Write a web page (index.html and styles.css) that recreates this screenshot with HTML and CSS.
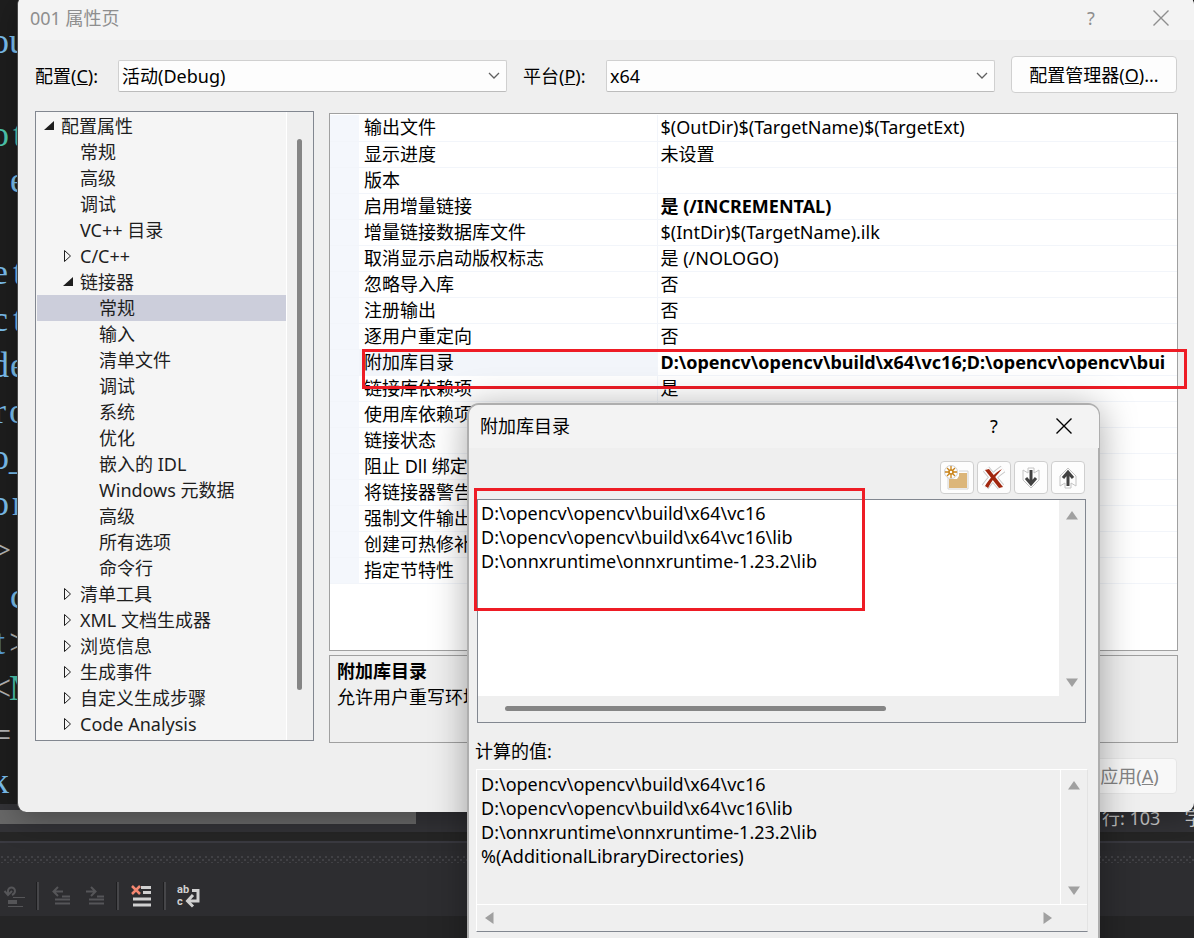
FILE: index.html
```html
<!DOCTYPE html>
<html lang="zh-CN">
<head>
<meta charset="utf-8">
<title>001 属性页</title>
<link rel="stylesheet" href="styles.css">
</head>
<body>
<div class="desktop">
  <div class="ide">
    <div class="code">
      <div class="line"><b>o</b><b>u</b></div>
      <div class="line"></div>
      <div class="line type"><b>o</b><b>t</b></div>
      <div class="line"><b></b><b>e</b></div>
      <div class="line"></div>
      <div class="line"><b>e</b><b>t</b></div>
      <div class="line"><b>c</b><b>t</b></div>
      <div class="line"><b>d</b><b>e</b></div>
      <div class="line"><b>r</b><b>o</b></div>
      <div class="line"><b>o</b><b>_</b></div>
      <div class="line"><b>o</b><b>r</b></div>
      <div class="line punct"><b>&gt;</b></div>
      <div class="line"><b></b><b>c</b></div>
      <div class="line keyword"><b>t</b><b class="punct">&gt;</b></div>
      <div class="line type"><b class="punct">&lt;</b><b>M</b></div>
      <div class="line punct"><b>=</b></div>
      <div class="line"><b>k</b></div>
    </div>
    <div class="status">
      <div class="hscroll"></div>
      <div class="position"><span>行: 103</span><span>字</span></div>
    </div>
    <div class="splitter"></div>
    <div class="panel">
      <div class="grip"></div>
      <div class="tools">
        <svg class="tool-icon dim" viewBox="0 0 22 24"><path d="M5 10V7a3.500 3.500 0 1 1 7 0c0 2-1 3-3 4M1.500 7 5 11l4-4" fill="none" stroke="currentColor" stroke-width="2"/><path d="M10 13.500h12M5 22.500h15" stroke="currentColor"/><path d="M5 16h9v4H5z" fill="currentColor"/></svg>
        <i class="sep"></i>
        <svg class="tool-icon dim" viewBox="0 0 22 24"><path d="M3 7.500h10M8 3 3.500 7.500 8 12" fill="none" stroke="currentColor" stroke-width="2"/><path d="M12 12.500h8M5 15.500h15M5 19.500h15" stroke="currentColor" stroke-width="2"/></svg>
        <svg class="tool-icon dim" viewBox="0 0 22 24"><path d="M3 7.500h10M8 3l4.500 4.500L8 12" fill="none" stroke="currentColor" stroke-width="2"/><path d="M14 12.500h7M6 15.500h15M6 19.500h15" stroke="currentColor" stroke-width="2"/></svg>
        <i class="sep"></i>
        <svg class="tool-icon" viewBox="0 0 22 24"><path d="M11 3.500h10M13 8.500h8M3 15h18M3 21h18" stroke="#d0d0d0" stroke-width="3"/><path d="m2 2 8 8M10 2l-8 8" stroke="#f48771" stroke-width="2.500"/></svg>
        <i class="sep"></i>
        <div class="wrap-icon"><span>ab</span><span>c</span><svg viewBox="0 0 24 24"><path d="M15 6.500h6V17h-9" fill="none" stroke="#d0d0d0" stroke-width="3"/><path d="m16 11-5.500 6 5.500 5.500" fill="none" stroke="#d0d0d0" stroke-width="3"/></svg></div>
      </div>
    </div>
  </div>

  <main class="window">
    <header class="titlebar">
      <h1>001 属性页</h1>
      <button class="caption" aria-label="帮助">?</button>
      <button class="caption" aria-label="关闭"><svg viewBox="0 0 16 16"><path d="m.5.5 15 15m0-15-15 15"/></svg></button>
    </header>
    <div class="options">
      <label for="config">配置(<u>C</u>):</label>
      <div class="combo"><select id="config"><option>活动(Debug)</option></select><svg viewBox="0 0 12 8"><path d="m1 1 5 5 5-5"/></svg></div>
      <label for="platform">平台(<u>P</u>):</label>
      <div class="combo"><select id="platform"><option>x64</option></select><svg viewBox="0 0 12 8"><path d="m1 1 5 5 5-5"/></svg></div>
      <button class="btn">配置管理器(<u>O</u>)...</button>
    </div>
    <div class="content">
      <nav class="tree">
        <ul>
          <li class="open"><svg viewBox="0 0 10 10"><path d="M10 0v9H0z"/></svg>配置属性</li>
          <li class="l1">常规</li>
          <li class="l1">高级</li>
          <li class="l1">调试</li>
          <li class="l1">VC++ 目录</li>
          <li class="l1 closed"><svg viewBox="0 0 8 13"><path d="M.5.500v11l6-5.500z"/></svg>C/C++</li>
          <li class="l1 open"><svg viewBox="0 0 10 10"><path d="M10 0v9H0z"/></svg>链接器</li>
          <li class="l2 selected">常规</li>
          <li class="l2">输入</li>
          <li class="l2">清单文件</li>
          <li class="l2">调试</li>
          <li class="l2">系统</li>
          <li class="l2">优化</li>
          <li class="l2">嵌入的 IDL</li>
          <li class="l2">Windows 元数据</li>
          <li class="l2">高级</li>
          <li class="l2">所有选项</li>
          <li class="l2">命令行</li>
          <li class="l1 closed"><svg viewBox="0 0 8 13"><path d="M.5.500v11l6-5.500z"/></svg>清单工具</li>
          <li class="l1 closed"><svg viewBox="0 0 8 13"><path d="M.5.500v11l6-5.500z"/></svg>XML 文档生成器</li>
          <li class="l1 closed"><svg viewBox="0 0 8 13"><path d="M.5.500v11l6-5.500z"/></svg>浏览信息</li>
          <li class="l1 closed"><svg viewBox="0 0 8 13"><path d="M.5.500v11l6-5.500z"/></svg>生成事件</li>
          <li class="l1 closed"><svg viewBox="0 0 8 13"><path d="M.5.500v11l6-5.500z"/></svg>自定义生成步骤</li>
          <li class="l1 closed"><svg viewBox="0 0 8 13"><path d="M.5.500v11l6-5.500z"/></svg>Code Analysis</li>
        </ul>
        <div class="tree-scroll"><i></i></div>
      </nav>
      <section class="props">
        <div class="grid">
          <table>
            <colgroup><col class="gutter"><col class="name"><col></colgroup>
            <tbody>
            <tr><td></td><th>输出文件</th><td>$(OutDir)$(TargetName)$(TargetExt)</td></tr>
            <tr><td></td><th>显示进度</th><td>未设置</td></tr>
            <tr><td></td><th>版本</th><td></td></tr>
            <tr><td></td><th>启用增量链接</th><td class="set">是 (/INCREMENTAL)</td></tr>
            <tr><td></td><th>增量链接数据库文件</th><td>$(IntDir)$(TargetName).ilk</td></tr>
            <tr><td></td><th>取消显示启动版权标志</th><td>是 (/NOLOGO)</td></tr>
            <tr><td></td><th>忽略导入库</th><td>否</td></tr>
            <tr><td></td><th>注册输出</th><td>否</td></tr>
            <tr><td></td><th>逐用户重定向</th><td>否</td></tr>
            <tr class="current"><td></td><th>附加库目录</th><td class="set">D:\opencv\opencv\build\x64\vc16;D:\opencv\opencv\bui</td></tr>
            <tr><td></td><th>链接库依赖项</th><td>是</td></tr>
            <tr><td></td><th>使用库依赖项</th><td></td></tr>
            <tr><td></td><th>链接状态</th><td></td></tr>
            <tr><td></td><th>阻止 Dll 绑定</th><td></td></tr>
            <tr><td></td><th>将链接器警告</th><td></td></tr>
            <tr><td></td><th>强制文件输出</th><td></td></tr>
            <tr><td></td><th>创建可热修补</th><td></td></tr>
            <tr><td></td><th>指定节特性</th><td></td></tr>
            </tbody>
          </table>
          <div class="mark mark-row"></div>
        </div>
        <div class="description"><strong>附加库目录</strong><p>允许用户重写环境</p></div>
      </section>
    </div>
    <footer class="actions"><button class="btn apply" disabled>应用(<u>A</u>)</button></footer>
  </main>

  <section class="dialog" role="dialog" aria-labelledby="dialog-title">
    <header class="titlebar">
      <h2 id="dialog-title">附加库目录</h2>
      <button class="caption" aria-label="帮助">?</button>
      <button class="caption" aria-label="关闭"><svg viewBox="0 0 16 16"><path d="m.5.5 15 15m0-15-15 15"/></svg></button>
    </header>
    <div class="dialog-tools">
      <button aria-label="新行"><svg viewBox="0 0 26 26"><path d="M4 12v12h20V6h-9" fill="none" stroke="#d4d4d4"/><path d="M5 14h8l2-3h8v12H5z" fill="#dcb67a"/><path d="M15 8h8v3h-8z" fill="#dcb67a"/><circle cx="7" cy="7" r="6.500" fill="#fff" stroke="#cfcfcf"/><path d="M7 1v12M1 7h12M3 3l8 8m0-8-8 8" stroke="#c98318" stroke-width="1.300"/><circle cx="7" cy="7" r="2" fill="#fff" stroke="#c98318" stroke-width="1.500"/></svg></button>
      <button aria-label="删除"><svg viewBox="0 0 26 26"><path d="m5 4 15 18M22 4C16 8 9 15 4 22" fill="none" stroke="#c8c8c8" stroke-width="8"/><path d="m5 4 15 18M22 4C16 8 9 15 4 22" fill="none" stroke="#fdfdfd" stroke-width="6"/><path d="m4 5 4-1 14 18-4 1z" fill="#a1260d"/><path d="M21 4C14 8 8 14 4 21l3 2C11 15 16 10 21 4z" fill="#a1260d"/></svg></button>
      <button aria-label="下移"><svg viewBox="0 0 26 26"><path d="M10 3h6v5l5-3v10l-8 8-8-8V5l5 3z" fill="#fdfdfd" stroke="#c4c4c4"/><path d="M13 5v14M8 13l5 6 5-6" fill="none" stroke="#424242" stroke-width="3"/></svg></button>
      <button aria-label="上移"><svg viewBox="0 0 26 26"><path d="M10 23h6v-5l5 3V11l-8-8-8 8v10l5-3z" fill="#fdfdfd" stroke="#c4c4c4"/><path d="M13 21V7M8 13l5-6 5 6" fill="none" stroke="#424242" stroke-width="3"/></svg></button>
    </div>
    <div class="edit">
      <textarea aria-label="附加库目录" wrap="off" spellcheck="false">D:\opencv\opencv\build\x64\vc16
D:\opencv\opencv\build\x64\vc16\lib
D:\onnxruntime\onnxruntime-1.23.2\lib</textarea>
      <div class="vbar"><svg viewBox="0 0 12 9"><path d="M6 0 12 8.500H0z"/></svg><svg viewBox="0 0 12 9"><path d="M6 9 0 .5h12z"/></svg></div>
      <div class="hbar"><i></i></div>
      <div class="mark mark-edit"></div>
    </div>
    <label class="computed-label" for="computed">计算的值:</label>
    <div class="edit computed">
      <textarea id="computed" wrap="off" readonly spellcheck="false">D:\opencv\opencv\build\x64\vc16
D:\opencv\opencv\build\x64\vc16\lib
D:\onnxruntime\onnxruntime-1.23.2\lib
%(AdditionalLibraryDirectories)</textarea>
      <div class="vbar"><svg viewBox="0 0 12 9"><path d="M6 0 12 8.500H0z"/></svg><svg viewBox="0 0 12 9"><path d="M6 9 0 .5h12z"/></svg></div>
      <div class="hbar"><svg viewBox="0 0 9 12"><path d="M0 6 8.500 0v12z"/></svg><svg viewBox="0 0 9 12"><path d="M9 6 .5 0v12z"/></svg></div>
    </div>
  </section>
</div>
</body>
</html>
```

FILE: styles.css
```css
* { box-sizing: border-box; }
body, h1, h2, p, ul { margin: 0; padding: 0; }
body, button, select, textarea {
  font-family: "Noto Sans", "Noto Sans CJK SC", sans-serif;
  font-size: 18px;
  line-height: 24px;
  color: #000;
}
body { background: #252526; overflow: hidden; }
.desktop { position: relative; height: 100vh; overflow: hidden; }

/* Editor behind the windows */
.ide { display: flex; flex-direction: column; height: 100%; }
.code { display: flex; flex-direction: column; flex: 1; min-height: 0; padding-top: 18px; background: #1e1e1e; color: #7cc0f0; overflow: hidden; }
.line { display: flex; align-items: center; flex: 1; min-height: 0; margin-left: -9px; font: 36px/36px "Liberation Serif", serif; }
.line b { flex: none; width: 18px; font-weight: normal; text-align: center; }
.type { color: #4ec9b0; }
.keyword { color: #569cd6; }
.punct { color: #b4b4b4; }
.status { display: flex; justify-content: space-between; height: 28px; background: #333337; overflow: hidden; }
.hscroll { width: 416px; height: 14px; margin-top: 6px; background: #686868; }
.position { display: flex; gap: 24px; width: 92px; padding-top: 2px; white-space: nowrap; color: #d0d0d0; }
.position span { flex: none; }
.splitter { height: 11px; border-bottom: 2px solid #3a3a41; background: #262626; }
.panel { height: 73px; margin-bottom: 22px; background: #2d2d30; }
.grip {
  height: 8px;
  margin-top: 12px;
  background:
    conic-gradient(from 90deg at 4px 4px, #414145 25%, transparent 0) 0 0 / 6px 6px,
    conic-gradient(from 90deg at 4px 4px, #414145 25%, transparent 0) 3px 3px / 6px 6px;
}
.tools { display: flex; align-items: center; gap: 11px; height: 28px; margin: 19px 0 0 3px; }
.tool-icon { width: 22px; height: 24px; }
.dim { color: #555558; }
.sep { width: 3px; height: 28px; border-left: 1px solid #1e1e20; border-right: 2px solid #464649; }
.wrap-icon { display: grid; grid-template: 12px 12px / 24px; }
.wrap-icon span { grid-column: 1; font: bold 11px/12px Roboto, sans-serif; color: #d0d0d0; }
.wrap-icon span:first-child { grid-row: 1; }
.wrap-icon span:nth-child(2) { grid-row: 2; }
.wrap-icon svg { grid-area: 1 / 1 / 3 / 2; width: 24px; height: 24px; }

/* Property pages window */
.window {
  position: absolute;
  top: -4px;
  left: 17px;
  right: 0;
  border-left: 1px solid #484848;
  border-radius: 9px;
  background: #efefef;
  box-shadow: 0 8px 30px rgba(0, 0, 0, .3);
  overflow: hidden;
}
.titlebar { display: flex; align-items: center; height: 44px; padding: 0 0 0 12px; background: #f3f3f3; }
.titlebar h1, .titlebar h2 { flex: 1; font-size: 18px; font-weight: normal; }
.caption { width: 70px; height: 36px; padding: 0; border: 0; background: none; }
.caption svg { display: block; width: 16px; height: 16px; margin: auto; fill: none; stroke: currentColor; stroke-width: 1.4; }
.window .titlebar { margin-right: -2px; }
.window h1, .window .caption { color: #8e8e8e; }

.options { display: flex; align-items: center; gap: 16px; padding: 16px 17px 0; }
.options label { width: 67px; padding-top: 2px; white-space: nowrap; }
.combo { display: grid; flex: 1; align-items: center; min-width: 0; padding-top: 2px; }
.combo > * { grid-area: 1 / 1; }
.combo select { appearance: none; width: 100%; height: 32px; margin: 0; padding: 0 30px 0 3px; border: 1px solid #d0d0d0; border-bottom-color: #bcbcbc; border-radius: 2px; background: #fdfdfd; }
.combo svg { justify-self: end; width: 12px; height: 8px; margin-right: 7px; fill: none; stroke: #606060; stroke-width: 1.3; pointer-events: none; }
.btn { width: 166px; height: 37px; padding: 0; border: 1px solid #d0d0d0; border-radius: 4px; background: #fdfdfd; white-space: nowrap; }

.content { display: flex; align-items: flex-start; gap: 15px; padding: 18px 16px 0 17px; }
.tree { display: flex; flex: none; width: 279px; border: 1px solid #828790; background: #f5f5f5; color: #1e1e1e; }
.tree ul { flex: 1; padding: 1px 0 3px 1px; list-style: none; }
.tree li { display: flex; align-items: center; height: 26px; padding-left: 24px; white-space: nowrap; }
.tree .l1 { padding-left: 43px; }
.tree .l2 { padding-left: 62px; }
.tree .selected { background: #cccedb; }
.tree .open svg { width: 10px; height: 10px; margin: 0 7px 0 -17px; fill: #1e1e1e; }
.tree .closed svg { width: 8px; height: 13px; margin: 0 8px 0 -16px; fill: none; stroke: #1e1e1e; }
.tree-scroll { width: 27px; padding: 27px 0 50px 10px; border-left: 1px solid #fff; background: #efefef; }
.tree-scroll i { display: block; width: 5px; height: 100%; border-radius: 3px; background: #858585; }

.props { display: flex; flex: 1; flex-direction: column; gap: 4px; min-width: 0; padding-top: 2px; }
.grid { position: relative; padding: 1px 0 66px; border: 1px solid #a0a0a0; background: #fff; }
.grid table { width: 100%; table-layout: fixed; border-collapse: collapse; }
.gutter { width: 29px; }
.name { width: 298px; }
.grid th, .grid td { height: 26px; padding: 0 0 0 3px; border-bottom: 1px solid #f2f5fa; font-weight: normal; line-height: 25px; text-align: left; white-space: nowrap; overflow: hidden; }
.grid th { border-right: 1px solid #f2f5fa; padding-left: 5px; }
.grid td:first-child { background: #f4f7fc; }
.grid .set { font-weight: bold; }
.current th { background: #f2f5fa; }
.mark { position: absolute; border: 3px solid #ee1c25; pointer-events: none; }
.mark-row { top: 235px; left: 32px; right: -10px; height: 40px; }
.description { height: 88px; padding: 2px 7px; border: 1px solid #a0a0a0; line-height: 26px; white-space: nowrap; }
.description strong { display: block; }
.actions { display: flex; justify-content: flex-end; padding: 15px 17px 18px; }
.apply { width: 112px; height: 36px; border-color: #e6e6e6; background: #f8f8f8; color: #838383; padding: 0 0 0 17px; }

/* Directory editor dialog */
.dialog {
  position: absolute;
  top: 403px;
  left: 467px;
  width: 633px;
  padding-bottom: 80px;
  border: 2px solid #aeaeae;
  border-radius: 12px;
  background: #efefef;
  box-shadow: 0 4px 36px rgba(0, 0, 0, .34);
}
.dialog .titlebar { height: 43px; margin-right: -1px; padding: 0 0 2px 11px; border-radius: 10px 10px 0 0; }
.dialog-tools { display: flex; justify-content: flex-end; gap: 3px; padding: 13px 13px 5px; }
.dialog-tools button { display: grid; place-items: center; width: 34px; height: 33px; padding: 0; border: 1px solid #cfcfcf; border-radius: 4px; background: #fdfdfd; }
.dialog-tools svg { width: 26px; height: 26px; }
.edit { position: relative; display: grid; grid-template: 196px 26px / 1fr 26px; margin: 0 12px 0 8px; border: 1px solid #828790; background: #fff; }
.edit textarea { display: block; width: 100%; height: 100%; margin: 0; padding: 1px 3px; border: 0; background: none; resize: none; overflow: hidden; outline: 0; }
.vbar { display: flex; flex-direction: column; align-items: center; justify-content: space-between; padding: 11px 1px 9px 0; background: #efefef; }
.hbar { display: flex; align-items: center; justify-content: space-between; grid-column: 1 / 3; padding: 0 0 2px 27px; background: #efefef; }
.hbar i { width: 381px; height: 5px; border-radius: 3px; background: #858585; }
.edit svg { fill: #a0a0a0; }
.vbar svg { width: 12px; height: 9px; }
.hbar svg { width: 9px; height: 12px; }
.mark-edit { top: -12px; left: -4px; width: 391px; height: 123px; }
.computed-label { display: block; padding: 16px 6px 6px; }
.computed { grid-template: 134px 27px / 1fr 27px; margin: 0 10px 0 7px; border-color: #fff #e3e3e3 #828790 #fff; background: #efefef; }
.computed textarea { padding: 2px 4px; }
.computed .vbar { border-left: 1px solid #fff; }
.computed .hbar { padding: 0 35px 1px 8px; border-top: 1px solid #fff; }
```
